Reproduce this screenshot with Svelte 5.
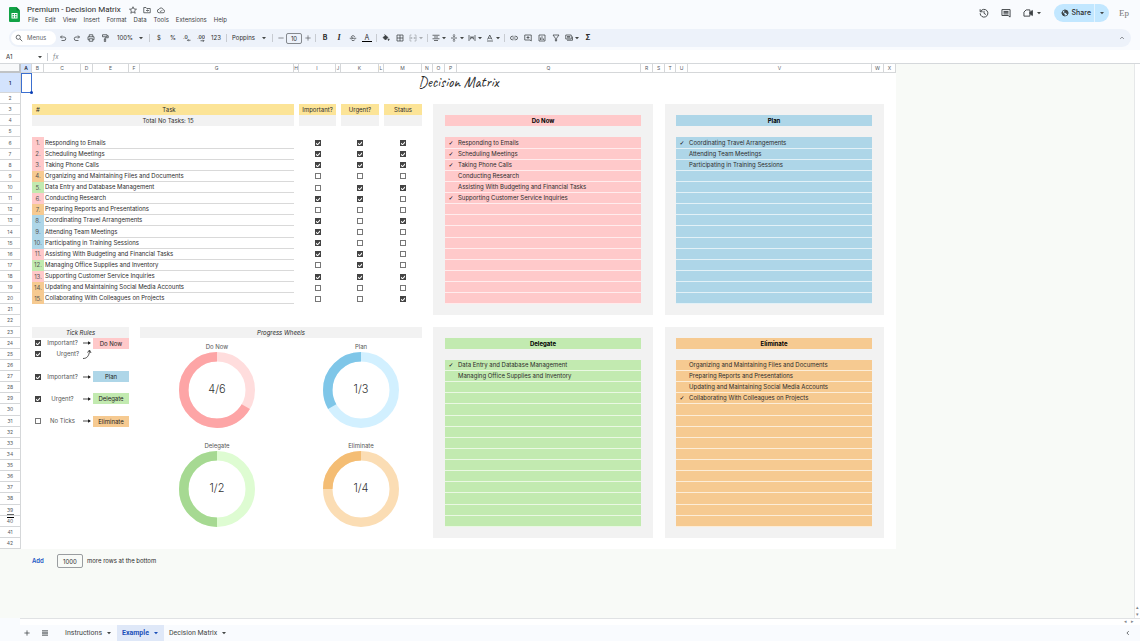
<script lang="ts">
  type Kind = 'now' | 'plan' | 'delegate' | 'eliminate';

  interface Task {
    name: string;
    important: boolean;
    urgent: boolean;
    done: boolean;
  }

  const menus = ['File', 'Edit', 'View', 'Insert', 'Format', 'Data', 'Tools', 'Extensions', 'Help'];
  const columns = 'ABCDEFGHIJKLMNOPQRSTUVWX'.split('');
  const rows = Array.from({ length: 42 }, (_, i) => i + 1);

  // name, important, urgent, status
  const source: [string, number, number, number][] = [
    ['Responding to Emails', 1, 1, 1],
    ['Scheduling Meetings', 1, 1, 1],
    ['Taking Phone Calls', 1, 1, 1],
    ['Organizing and Maintaining Files and Documents', 0, 0, 0],
    ['Data Entry and Database Management', 0, 1, 1],
    ['Conducting Research', 1, 1, 0],
    ['Preparing Reports and Presentations', 0, 0, 0],
    ['Coordinating Travel Arrangements', 1, 0, 1],
    ['Attending Team Meetings', 1, 0, 0],
    ['Participating in Training Sessions', 1, 0, 0],
    ['Assisting With Budgeting and Financial Tasks', 1, 1, 0],
    ['Managing Office Supplies and Inventory', 0, 1, 0],
    ['Supporting Customer Service Inquiries', 1, 1, 1],
    ['Updating and Maintaining Social Media Accounts', 0, 0, 0],
    ['Collaborating With Colleagues on Projects', 0, 0, 1],
  ];

  let tasks = $state<Task[]>(
    source.map(([name, i, u, s]) => ({ name, important: !!i, urgent: !!u, done: !!s })),
  );

  const quadrants: { kind: Kind; title: string }[] = [
    { kind: 'now', title: 'Do Now' },
    { kind: 'plan', title: 'Plan' },
    { kind: 'delegate', title: 'Delegate' },
    { kind: 'eliminate', title: 'Eliminate' },
  ];

  const rules: { row: number; label: string; checked: boolean; kind?: Kind; title?: string }[] = [
    { row: 1, label: 'Important?', checked: true, kind: 'now', title: 'Do Now' },
    { row: 2, label: 'Urgent?', checked: true },
    { row: 4, label: 'Important?', checked: true, kind: 'plan', title: 'Plan' },
    { row: 6, label: 'Urgent?', checked: true, kind: 'delegate', title: 'Delegate' },
    { row: 8, label: 'No Ticks', checked: false, kind: 'eliminate', title: 'Eliminate' },
  ];

  function kindOf(t: Task): Kind {
    if (t.important) return t.urgent ? 'now' : 'plan';
    return t.urgent ? 'delegate' : 'eliminate';
  }

  function listFor(kind: Kind) {
    const list: (Task | null)[] = tasks.filter((t) => kindOf(t) === kind);
    while (list.length < 15) list.push(null);
    return list;
  }

  function progress(kind: Kind) {
    const list = tasks.filter((t) => kindOf(t) === kind);
    return { done: list.filter((t) => t.done).length, total: list.length };
  }

  let zoom = $state('100%');
  let font = $state('Poppins');
  let size = $state('10');
  let moreRows = $state('1000');
</script>

{#snippet caret()}
  <svg class="caret" viewBox="0 0 6 6" aria-hidden="true"><path d="M1 2h4L3 4.2z" /></svg>
{/snippet}

{#snippet icon(name: string)}
  <svg class="icon" viewBox="0 0 16 16" aria-hidden="true">
    {#if name === 'search'}
      <circle cx="6.5" cy="6.5" r="4.2" /><path d="M10 10l4.5 4.5" />
    {:else if name === 'undo'}
      <path d="M3 6h7a3.5 3.5 0 0 1 0 7H5M6 3L3 6l3 3" />
    {:else if name === 'redo'}
      <path d="M13 6H6a3.5 3.5 0 0 0 0 7h5M10 3l3 3-3 3" />
    {:else if name === 'print'}
      <path d="M4.5 5.5v-4h7v4M4.5 11.5H2v-6h12v6h-2.5M4.5 9.5h7v5h-7z" />
    {:else if name === 'paint'}
      <path d="M3 1.5h9v4H3zM12 3.5h2.5v4H8v2.5M6.7 10h2.6v5H6.7z" />
    {:else if name === 'decless'}
      <text x="0" y="10">.0</text><path d="M15 12.5H9M11 10.5l-2 2 2 2" />
    {:else if name === 'decmore'}
      <text x="0" y="10">.00</text><path d="M7 13.5h7M12 11.5l2 2-2 2" />
    {:else if name === 'minus'}
      <path d="M1 8h14" />
    {:else if name === 'plus'}
      <path d="M1 8h14M8 1v14" />
    {:else if name === 'strike'}
      <path d="M1.5 8.5h13M11.5 5.5C11 3 5 2.5 4.800 5.500c0 1.500 1.500 2.200 3.200 3M4.500 11c.8 3 7 2.800 7 0" />
    {:else if name === 'fill'}
      <path class="solid" d="M5 1l7 6-5 5-5-5 4-3M13.500 9.500c3 4-3 4-1.200 1.500z" />
    {:else if name === 'borders'}
      <path d="M2 2h12v12H2zM8 2v12M2 8h12" />
    {:else if name === 'merge'}
      <path d="M5 2H2v12h3M11 2h3v12h-3M1 8h5M4.500 6l2 2-2 2M15 8h-5M11.500 6l-2 2 2 2" />
    {:else if name === 'align'}
      <path d="M1 2.500h14M4 6h8M1 9.500h14M4 13h8" />
    {:else if name === 'valign'}
      <path d="M2 8h12M8 0v5M6 3.500L8 5.500l2-2M8 16v-5M6 12.500l2-2 2 2" />
    {:else if name === 'wrap'}
      <path d="M2 2v12M14 2v12M4.500 11l1.500-6 2 4 2-4 1.500 6" />
    {:else if name === 'rotate'}
      <path d="M3 11L7.500 2 12 11M4.500 8.500h6M2 14h12" />
    {:else if name === 'link'}
      <path d="M7 4.500H4.500a3.500 3.500 0 0 0 0 7H7M9 4.500h2.500a3.500 3.500 0 0 1 0 7H9M5 8h6" />
    {:else if name === 'comment'}
      <path d="M1.500 2h13v12l-2.500-2H1.500zM8 4v6M5 7h6" />
    {:else if name === 'chart'}
      <path d="M2 2h12v12H2zM5 12V7M8 12V4.500M11 12V9" />
    {:else if name === 'filter'}
      <path d="M2 2h12L9.200 8.500V14H6.800V8.500z" />
    {:else if name === 'views'}
      <path d="M1.500 2h11v8h-11zM4 12.500h11V5M4 5h6M4 7.500h6" />
    {:else if name === 'up'}
      <path d="M3 10.500l5-5 5 5" />
    {:else if name === 'left'}
      <path d="M10 3L5 8l5 5" />
    {:else if name === 'list'}
      <path d="M0 2h16M0 6h16M0 10h16M0 14h16" />
    {:else if name === 'star'}
      <path d="M8 1.500l2 4.500 5 .4-3.800 3.200 1.200 4.900L8 11.900l-4.400 2.600 1.200-4.900L1 6.400 6 6z" />
    {:else if name === 'folder'}
      <path d="M1.500 3H6l1.500 2h7v8.500h-13zM6 9h5M9 7l2 2-2 2" />
    {:else if name === 'cloud'}
      <path d="M4.500 13.500a3.500 3.500 0 0 1-.5-7 4.500 4.500 0 0 1 8.500 1 3 3 0 0 1-.5 6zM5.800 9.500l1.700 1.700 3-3" />
    {:else if name === 'history'}
      <path d="M2.500 5.500A6.200 6.200 0 1 1 1.800 8.500M1.800 2v4h4M8 4.500V8.500l3 2" />
    {:else if name === 'chat'}
      <path d="M1.500 2.500h13v12l-3-2.500h-10zM4 5.500h8M4 7.500h8M4 9.500h8" />
    {:else if name === 'video'}
      <path d="M5 3h6v10H1.500V6.500z" /><path class="solid" d="M11 7l4-3v8l-4-3z" />
    {:else if name === 'globe'}
      <circle cx="8" cy="8" r="6" /><path class="solid" d="M2.500 6l4 4v3.500C3 13 2 9 2.500 6zM7 2.500l5 .5c2 2 2.500 5 1 8l-2-2V7H7V5l2-1z" />
    {/if}
  </svg>
{/snippet}

{#snippet tool(name: string, label: string)}
  <button type="button" class="tool" aria-label={label}>{@render icon(name)}</button>
{/snippet}

{#snippet dropTool(name: string, label: string)}
  <button type="button" class="tool drop" aria-label={label}>{@render icon(name)}{@render caret()}</button>
{/snippet}

<div class="app">
  <header class="top">
    <svg class="logo" viewBox="0 0 22 30" aria-hidden="true">
      <path fill="#12a346" d="M2 0h13l7 7v21a2 2 0 0 1-2 2H2a2 2 0 0 1-2-2V2a2 2 0 0 1 2-2z" />
      <path fill="#0b7d35" d="M15 0l7 7h-7z" />
      <path fill="#fff" fill-rule="evenodd" d="M5 12h12v11H5zM7 14v2.500h3V14zm5 0v2.500h3V14zm-5 4.500V21h3v-2.500zm5 0V21h3v-2.500z" />
    </svg>
    <div class="heading">
      <div class="title-row">
        <h1>Premium - Decision Matrix</h1>
        {@render tool('star', 'Star')}
        {@render tool('folder', 'Move')}
        {@render tool('cloud', 'Saved to Drive')}
      </div>
      <nav class="menus">
        {#each menus as menu (menu)}
          <button type="button">{menu}</button>
        {/each}
      </nav>
    </div>
    <div class="account">
      <button type="button" class="big" aria-label="Version history">{@render icon('history')}</button>
      <button type="button" class="big" aria-label="Comments">{@render icon('chat')}</button>
      <button type="button" class="big" aria-label="Join a call">{@render icon('video')}{@render caret()}</button>
      <div class="share">
        <button type="button" class="share-main">{@render icon('globe')}Share</button>
        <button type="button" class="share-more" aria-label="Share options">{@render caret()}</button>
      </div>
      <span class="avatar">Ep</span>
    </div>
  </header>

  <div class="toolbar">
    <button type="button" class="search">{@render icon('search')}Menus</button>
    {@render tool('undo', 'Undo')}
    {@render tool('redo', 'Redo')}
    {@render tool('print', 'Print')}
    {@render tool('paint', 'Paint format')}
    <label class="pick zoom-pick">
      <select bind:value={zoom} aria-label="Zoom"><option>100%</option><option>50%</option></select>
      {@render caret()}
    </label>
    <span class="sep"></span>
    <button type="button" class="tool">$</button>
    <button type="button" class="tool">%</button>
    {@render tool('decless', 'Decrease decimal places')}
    {@render tool('decmore', 'Increase decimal places')}
    <button type="button" class="tool wide">123</button>
    <span class="sep"></span>
    <label class="pick font-pick">
      <select bind:value={font} aria-label="Font"><option>Poppins</option><option>Caveat</option></select>
      {@render caret()}
    </label>
    <span class="sep"></span>
    <button type="button" class="tool step" aria-label="Decrease font size">{@render icon('minus')}</button>
    <input class="size" bind:value={size} aria-label="Font size" />
    <button type="button" class="tool step" aria-label="Increase font size">{@render icon('plus')}</button>
    <span class="sep"></span>
    <button type="button" class="tool bold">B</button>
    <button type="button" class="tool italic">I</button>
    {@render tool('strike', 'Strikethrough')}
    <button type="button" class="tool"><span class="text-color">A</span></button>
    <span class="sep"></span>
    {@render tool('fill', 'Fill color')}
    {@render tool('borders', 'Borders')}
    <button type="button" class="tool drop faded" aria-label="Merge cells">{@render icon('merge')}{@render caret()}</button>
    <span class="sep"></span>
    {@render dropTool('align', 'Horizontal align')}
    {@render dropTool('valign', 'Vertical align')}
    {@render dropTool('wrap', 'Text wrapping')}
    {@render dropTool('rotate', 'Text rotation')}
    <span class="sep"></span>
    {@render tool('link', 'Insert link')}
    {@render tool('comment', 'Insert comment')}
    {@render tool('chart', 'Insert chart')}
    {@render tool('filter', 'Create a filter')}
    {@render dropTool('views', 'Filter views')}
    <button type="button" class="tool bold">Σ</button>
    <button type="button" class="tool collapse" aria-label="Hide the menus">{@render icon('up')}</button>
  </div>

  <div class="formula">
    <span class="cell-name">A1</span>
    {@render caret()}
    <span class="sep"></span>
    <span class="fx">fx</span>
  </div>

  <main class="workspace">
    <div class="scroll-area">
      <div class="sheet">
        <span class="corner"></span>
        {#each columns as col (col)}
          <span class="col-head" class:active={col === 'A'}>{col}</span>
        {/each}
        <div class="row-heads">
          {#each rows as row (row)}
            <span class="row-head" class:active={row === 1} class:frozen={row === 39}>{row}</span>
          {/each}
        </div>
        <div class="selected"></div>

        <h2 class="sheet-title">Decision Matrix</h2>

        <table class="tasks">
          <thead>
            <tr class="names">
              <th class="c-num">#</th>
              <th class="c-task">Task</th>
              <th class="c-imp">Important?</th>
              <th class="c-urg">Urgent?</th>
              <th class="c-sta">Status</th>
            </tr>
            <tr class="totals">
              <td class="c-total">Total No Tasks: {tasks.length}</td>
              <td class="c-imp"></td>
              <td class="c-urg"></td>
              <td class="c-sta"></td>
            </tr>
          </thead>
          <tbody>
            {#each tasks as task, i (task.name)}
              <tr style="grid-row: {i + 4}">
                <td class="c-num {kindOf(task)}">{i + 1}.</td>
                <td class="c-task">{task.name}</td>
                <td class="c-imp"><input type="checkbox" bind:checked={task.important} aria-label="Important: {task.name}" /></td>
                <td class="c-urg"><input type="checkbox" bind:checked={task.urgent} aria-label="Urgent: {task.name}" /></td>
                <td class="c-sta"><input type="checkbox" bind:checked={task.done} aria-label="Done: {task.name}" /></td>
              </tr>
            {/each}
          </tbody>
        </table>

        {#each quadrants as q (q.kind)}
          <section class="quadrant at-{q.kind}">
            <h3 class={q.kind}>{q.title}</h3>
            <ul class={q.kind}>
              {#each listFor(q.kind) as task}
                <li>
                  <span class="mark">{task?.done ? '✓' : ''}</span>
                  <span>{task?.name ?? ''}</span>
                </li>
              {/each}
            </ul>
          </section>
        {/each}

        <h3 class="band rules-band">Tick Rules</h3>
        <div class="rules">
          {#each rules as rule (rule.row)}
            <label class="rule" class:joined={!rule.kind} style="grid-row: {rule.row}">
              <input type="checkbox" checked={rule.checked} />
              <span class="rule-label">{rule.label}</span>
              {#if rule.kind}
                <svg class="arrow" viewBox="0 0 10 10" aria-hidden="true">
                  <path d="M1 5h7" /><path class="head" d="M6 3.2L9 5 6 6.800z" />
                </svg>
                <span class="chip {rule.kind}">{rule.title}</span>
              {:else}
                <svg class="arrow" viewBox="0 0 10 10" aria-hidden="true"><path d="M1 9.500C5 9.500 7 7 7.500 2M5.500 3.500l2-2.500 1.500 3" /></svg>
              {/if}
            </label>
          {/each}
        </div>

        <h3 class="band wheels-band">Progress Wheels</h3>
        <div class="wheels">
          {#each quadrants as q (q.kind)}
            {@const p = progress(q.kind)}
            <figure class="wheel wheel-{q.kind}">
              <figcaption>{q.title}</figcaption>
              <svg viewBox="0 0 76 76">
                <circle class="track" cx="38" cy="38" r="33.25" stroke-width="9.5" />
                <circle
                  class="value"
                  cx="38"
                  cy="38"
                  r="33.25"
                  stroke-width="9.5"
                  pathLength={p.total}
                  stroke-dasharray="{p.done} {p.total}"
                  transform="translate(76 0) scale(-1 1) rotate(-90 38 38)"
                />
                <text x="38" y="41">{p.done}/{p.total}</text>
              </svg>
            </figure>
          {/each}
        </div>
      </div>

      <form class="add-rows">
        <button type="button">Add</button>
        <input id="more-rows" bind:value={moreRows} />
        <label for="more-rows">more rows at the bottom</label>
      </form>
    </div>
    <div class="vbar"><span>▴</span><span>▾</span></div>
  </main>
  <div class="hbar"><span>◂</span><span>▸</span></div>

  <footer class="tabs">
    <button type="button" class="tab-tool" aria-label="Add sheet">{@render icon('plus')}</button>
    <button type="button" class="tab-tool" aria-label="All sheets">{@render icon('list')}</button>
    <button type="button" class="tab first">Instructions {@render caret()}</button>
    <button type="button" class="tab current">Example {@render caret()}</button>
    <button type="button" class="tab">Decision Matrix {@render caret()}</button>
    <button type="button" class="tab-tool explore" aria-label="Show side panel">{@render icon('left')}</button>
  </footer>
</div>

<style>
  :global(body) {
    margin: 0;
  }

  .app {
    --now: #ffc9ca;
    --plan: #aed6e8;
    --delegate: #c2eab0;
    --eliminate: #f6ca91;
    display: flex;
    flex-direction: column;
    height: 100vh;
    background: #f9fbfe;
    color: #2b2b2b;
    font-family: Inter, 'Liberation Sans', sans-serif;
    font-size: 6px;
    line-height: 10px;
    overflow: hidden;
  }

  .app :is(h1, h2, h3, ul, figure) {
    margin: 0;
    padding: 0;
    font-size: inherit;
    font-weight: 400;
    list-style: none;
  }

  button,
  select,
  input {
    box-sizing: border-box;
    margin: 0;
    padding: 0;
    border: none;
    background: transparent;
    color: inherit;
    font: inherit;
  }

  .icon {
    width: 8px;
    height: 8px;
    flex-shrink: 0;
    fill: none;
    stroke: #3c4043;
    stroke-width: 1.5;
  }

  .icon .solid {
    fill: #3c4043;
  }

  .icon text {
    fill: #3c4043;
    stroke: none;
    font-size: 10px;
    font-weight: 600;
  }

  .caret {
    width: 6px;
    height: 6px;
    flex-shrink: 0;
    fill: #444746;
  }

  .top {
    display: flex;
    align-items: flex-start;
    height: 29px;
    padding: 0 11px 0 9px;
    box-sizing: border-box;
    flex-shrink: 0;
  }

  .logo {
    width: 11px;
    height: 15px;
    margin-top: 7px;
  }

  .heading {
    flex: 1;
    padding: 4px 0 0 7px;
  }

  .title-row {
    display: flex;
    align-items: center;
    height: 11px;
  }

  .app .title-row h1 {
    margin-right: 5px;
    font-family: Roboto, sans-serif;
    font-size: 8px;
  }

  .menus {
    display: flex;
    gap: 7px;
    padding-left: 1px;
    color: #3c4043;
    font-size: 6px;
  }

  .account {
    display: flex;
    align-items: center;
    gap: 12px;
    padding-top: 4px;
  }

  .big {
    display: flex;
    align-items: center;
    gap: 3px;
  }

  .big .icon {
    width: 10px;
    height: 10px;
  }

  .share {
    display: flex;
    height: 18px;
    border-radius: 9px;
    background: #c2e7ff;
    overflow: hidden;
  }

  .share-main {
    display: flex;
    align-items: center;
    gap: 3px;
    padding: 0 3px 0 7px;
    font-size: 7px;
    font-weight: 500;
  }

  .share-more {
    display: flex;
    align-items: center;
    padding: 0 4px;
    border-left: 1px solid #e4f4ff;
  }

  .avatar {
    margin-left: -2px;
    font-family: 'Liberation Serif', serif;
    font-size: 9px;
    color: #777;
  }

  .toolbar {
    display: flex;
    align-items: center;
    height: 18px;
    margin: 0 9px;
    padding: 0 2px;
    flex-shrink: 0;
    border-radius: 9px;
    background: #edf2fa;
  }

  .search {
    display: flex;
    align-items: center;
    gap: 4px;
    width: 45px;
    height: 14px;
    padding-left: 4px;
    border-radius: 7px;
    background: #fff;
    color: #5f6368;
  }

  .tool {
    display: flex;
    align-items: center;
    justify-content: center;
    width: 14px;
    height: 12px;
    flex-shrink: 0;
  }

  .tool.wide {
    width: 16px;
  }

  .tool.step {
    width: 11px;
  }

  .step .icon {
    width: 6px;
    height: 6px;
  }

  .tool.drop {
    width: 18px;
  }

  .drop .icon {
    margin-right: 1px;
  }

  .faded {
    opacity: 0.4;
  }

  .bold {
    font-size: 7px;
    font-weight: 700;
  }

  .italic {
    font-family: 'Liberation Serif', serif;
    font-size: 8px;
    font-style: italic;
    font-weight: 700;
  }

  .text-color {
    width: 10px;
    border-bottom: 1px solid #000;
    font-size: 7px;
    line-height: 7px;
  }

  .collapse {
    margin-left: auto;
  }

  .collapse .icon {
    width: 6px;
    height: 6px;
  }

  .sep {
    width: 1px;
    height: 8px;
    margin: 0 2px;
    background: #c7cbd1;
  }

  .pick {
    display: flex;
    align-items: center;
    justify-content: space-between;
    box-sizing: border-box;
    padding: 0 3px 0 4px;
  }

  .pick select {
    appearance: none;
    width: 25px;
    height: 10px;
  }

  .zoom-pick {
    width: 35px;
    padding-left: 5px;
  }

  .zoom-pick select {
    width: 20px;
  }

  .font-pick {
    width: 41px;
    padding-left: 3px;
  }

  .size {
    width: 16px;
    height: 11px;
    border: 1px solid #85898e;
    border-radius: 2px;
    text-align: center;
  }

  .formula {
    display: flex;
    align-items: center;
    height: 13px;
    margin-top: 3px;
    padding-left: 6px;
    flex-shrink: 0;
    border-bottom: 1px solid #d5d8db;
    background: #fff;
  }

  .cell-name {
    width: 31px;
  }

  .formula .sep {
    margin-left: 4px;
  }

  .fx {
    margin-left: 3px;
    color: #80868b;
    font-style: italic;
  }

  .workspace {
    display: flex;
    flex: 1;
    min-height: 0;
    background: #f8faf7;
  }

  .scroll-area {
    flex: 1;
    min-width: 0;
    overflow: hidden;
  }

  .sheet {
    display: grid;
    grid-template-columns:
      21px 11px 12px 37px 12px 36px 11px 154px 5px 37px 5px 38px 5px 38px 11px 12px 12px 184px
      12px 12px 11px 12px 184px 12px 12px;
    grid-template-rows: 9px 20px repeat(41, minmax(0, 1fr));
    width: max-content;
    height: 485px;
    background: #fff;
  }

  .corner {
    box-sizing: border-box;
    border-right: 2px solid #c0c3c6;
    border-bottom: 2px solid #c0c3c6;
    background: #f8f9fa;
  }

  .col-head {
    box-sizing: border-box;
    border-right: 1px solid #d5d7d9;
    border-bottom: 1px solid #d5d7d9;
    color: #575b5f;
    font-size: 5px;
    line-height: 9px;
    text-align: center;
  }

  .col-head.active,
  .row-head.active {
    background: #d3e3fd;
    color: #1f2937;
    font-weight: 600;
  }

  .row-heads {
    display: grid;
    grid-row: 2 / -1;
    grid-column: 1;
    grid-template-rows: subgrid;
  }

  .row-head {
    position: relative;
    display: flex;
    align-items: center;
    justify-content: center;
    box-sizing: border-box;
    border-right: 1px solid #d5d7d9;
    border-bottom: 1px solid #d5d7d9;
    color: #575b5f;
    font-size: 5px;
  }

  .frozen::after {
    content: '';
    position: absolute;
    z-index: 1;
    bottom: -3px;
    left: 7px;
    width: 7px;
    height: 2px;
    border-top: 1px solid #666;
    border-bottom: 1px solid #000;
  }

  .selected {
    position: relative;
    grid-area: 2 / 2;
    border: 1px solid #3b6fd0;
  }

  .selected::after {
    content: '';
    position: absolute;
    right: -2px;
    bottom: -2px;
    width: 3px;
    height: 3px;
    border-radius: 50%;
    background: #0b3fb5;
  }

  .app .sheet-title {
    grid-area: 2 / 2 / 3 / 26;
    font-family: Caveat, cursive;
    font-size: 15px;
    line-height: 20px;
    text-align: center;
  }

  .now {
    background: var(--now);
  }

  .plan {
    background: var(--plan);
  }

  .delegate {
    background: var(--delegate);
  }

  .eliminate {
    background: var(--eliminate);
  }

  .tasks {
    display: grid;
    grid-area: 4 / 3 / 22 / 15;
    grid-template-columns: subgrid;
    grid-template-rows: subgrid;
  }

  .tasks :is(thead, tbody) {
    display: contents;
  }

  .tasks tr {
    display: grid;
    grid-column: 1 / -1;
    grid-template-columns: subgrid;
  }

  .tasks .names {
    grid-row: 1;
  }

  .tasks .totals {
    grid-row: 2;
  }

  .tasks :is(th, td) {
    display: flex;
    align-items: center;
    justify-content: center;
    min-height: 0;
    padding: 0;
    font-weight: 400;
    white-space: nowrap;
  }

  .c-num {
    grid-column: 1;
  }

  .c-task {
    grid-column: 2 / 7;
  }

  .c-total {
    grid-column: 1 / 7;
  }

  .c-imp {
    grid-column: 8;
  }

  .c-urg {
    grid-column: 10;
  }

  .c-sta {
    grid-column: 12;
  }

  .tasks .names th {
    background: #fce497;
  }

  .tasks .totals td {
    background: #f2f2f2;
  }

  .tasks .totals .c-total {
    padding-left: 10px;
  }

  .tasks tbody .c-num {
    color: #555;
  }

  .tasks tbody .c-task {
    justify-content: flex-start;
    padding-left: 1px;
    border-bottom: 1px solid #d9d9d9;
  }

  input[type='checkbox'] {
    appearance: none;
    width: 6px;
    height: 6px;
    border: 1px solid #777;
    background: #fff;
  }

  input[type='checkbox']:checked {
    border-color: #434343;
    background: #434343
      url("data:image/svg+xml,%3Csvg xmlns='http://www.w3.org/2000/svg' viewBox='0 0 6 6'%3E%3Cpath d='M.5 3l1.7 1.7L5.5 1.3' fill='none' stroke='white' stroke-width='1.2'/%3E%3C/svg%3E")
      center / 5px 5px no-repeat;
  }

  .quadrant {
    display: grid;
    grid-template-columns: subgrid;
    grid-template-rows: subgrid;
    background: #f2f2f2;
  }

  .at-now {
    grid-area: 4 / 16 / 23 / 20;
  }

  .at-plan {
    grid-area: 4 / 21 / 23 / 25;
  }

  .at-delegate {
    grid-area: 24 / 16 / 43 / 20;
  }

  .at-eliminate {
    grid-area: 24 / 21 / 43 / 25;
  }

  .app .quadrant h3 {
    grid-area: 2 / 2 / 3 / 4;
    color: #000;
    font-weight: 700;
    line-height: 11px;
    text-align: center;
  }

  .quadrant ul {
    display: grid;
    grid-area: 4 / 2 / 19 / 4;
    grid-template-columns: subgrid;
    grid-template-rows: subgrid;
  }

  .quadrant li {
    display: grid;
    grid-column: 1 / -1;
    grid-template-columns: subgrid;
    align-items: center;
    border-bottom: 1px solid rgb(255 255 255 / 65%);
  }

  .quadrant li span:last-child {
    padding-left: 1px;
  }

  .mark {
    color: #000;
    font-family: 'DejaVu Sans', sans-serif;
    font-weight: 700;
    text-align: center;
  }

  .app .band {
    background: #f2f2f2;
    font-style: italic;
    line-height: 11px;
    text-align: center;
  }

  .rules-band {
    grid-area: 24 / 3 / 25 / 7;
  }

  .wheels-band {
    grid-area: 24 / 8 / 25 / 15;
  }

  .rules {
    display: grid;
    grid-area: 25 / 3 / 33 / 7;
    grid-template-columns: subgrid;
    grid-template-rows: subgrid;
    color: #555;
  }

  .rule {
    display: grid;
    grid-column: 1 / -1;
    grid-template-columns: subgrid;
    align-items: center;
    justify-items: center;
  }

  .joined .rule-label {
    justify-self: end;
    padding-right: 2px;
  }

  .arrow {
    width: 10px;
    height: 10px;
    fill: none;
    stroke: #222;
    stroke-width: 0.8;
  }

  .arrow .head {
    fill: #222;
    stroke: none;
  }

  .chip {
    align-self: stretch;
    justify-self: stretch;
    color: #222;
    line-height: 11px;
    text-align: center;
  }

  .wheels {
    display: grid;
    grid-area: 25 / 7 / 43 / 16;
    grid-template-columns: 1fr 1fr;
    align-content: start;
    row-gap: 12px;
    padding: 3px 0 0 16px;
  }

  .wheel {
    display: flex;
    flex-direction: column;
    align-items: center;
    color: #555;
    line-height: 11px;
  }

  .wheel svg {
    width: 76px;
    height: 76px;
  }

  .wheel circle {
    fill: none;
  }

  .wheel text {
    fill: #333;
    font-size: 11px;
    font-weight: 300;
    text-anchor: middle;
  }

  .wheel-now .track {
    stroke: #ffdddd;
  }

  .wheel-now .value {
    stroke: #fda5a6;
  }

  .wheel-plan .track {
    stroke: #d2f0ff;
  }

  .wheel-plan .value {
    stroke: #7fc6e8;
  }

  .wheel-delegate .track {
    stroke: #defcd2;
  }

  .wheel-delegate .value {
    stroke: #a6d992;
  }

  .wheel-eliminate .track {
    stroke: #fbddb4;
  }

  .wheel-eliminate .value {
    stroke: #f4bd74;
  }

  .add-rows {
    display: flex;
    align-items: center;
    padding: 5px 0 0 32px;
  }

  .add-rows button {
    width: 25px;
    color: #1a56c4;
    font-weight: 600;
    text-align: left;
  }

  .add-rows input {
    width: 26px;
    height: 14px;
    margin-right: 4px;
    border: 1px solid #9a9da0;
    border-radius: 2px;
    text-align: center;
  }

  .vbar {
    display: flex;
    flex-direction: column;
    justify-content: flex-end;
    width: 5px;
    border-left: 1px solid #e6e8e9;
    background: #fff;
    color: #80868b;
    font-size: 5px;
    line-height: 7px;
    text-align: center;
  }

  .hbar {
    display: flex;
    justify-content: flex-end;
    gap: 4px;
    height: 6px;
    margin-left: 20px;
    padding-right: 6px;
    flex-shrink: 0;
    border-top: 1px solid #e0e2e4;
    background: #fff;
    color: #80868b;
    font-size: 5px;
    line-height: 5px;
  }

  .tabs {
    display: flex;
    height: 16px;
    padding: 0 8px 0 18px;
    flex-shrink: 0;
    color: #444746;
  }

  .tab-tool {
    display: flex;
    align-items: center;
    justify-content: center;
    width: 18px;
  }

  .tab-tool .icon {
    width: 6px;
    height: 6px;
    stroke-width: 2;
  }

  .explore {
    width: 8px;
    margin-left: auto;
  }

  .tab {
    display: flex;
    align-items: center;
    gap: 4px;
    padding: 0 5px;
    font-family: Roboto, sans-serif;
    font-size: 7px;
    white-space: nowrap;
  }

  .tab.first {
    margin-left: 6px;
  }

  .tab.current {
    background: #dfe8f8;
    color: #1a4fb8;
    font-weight: 700;
  }

  .tab.current .caret {
    fill: #1a4fb8;
  }
</style>
